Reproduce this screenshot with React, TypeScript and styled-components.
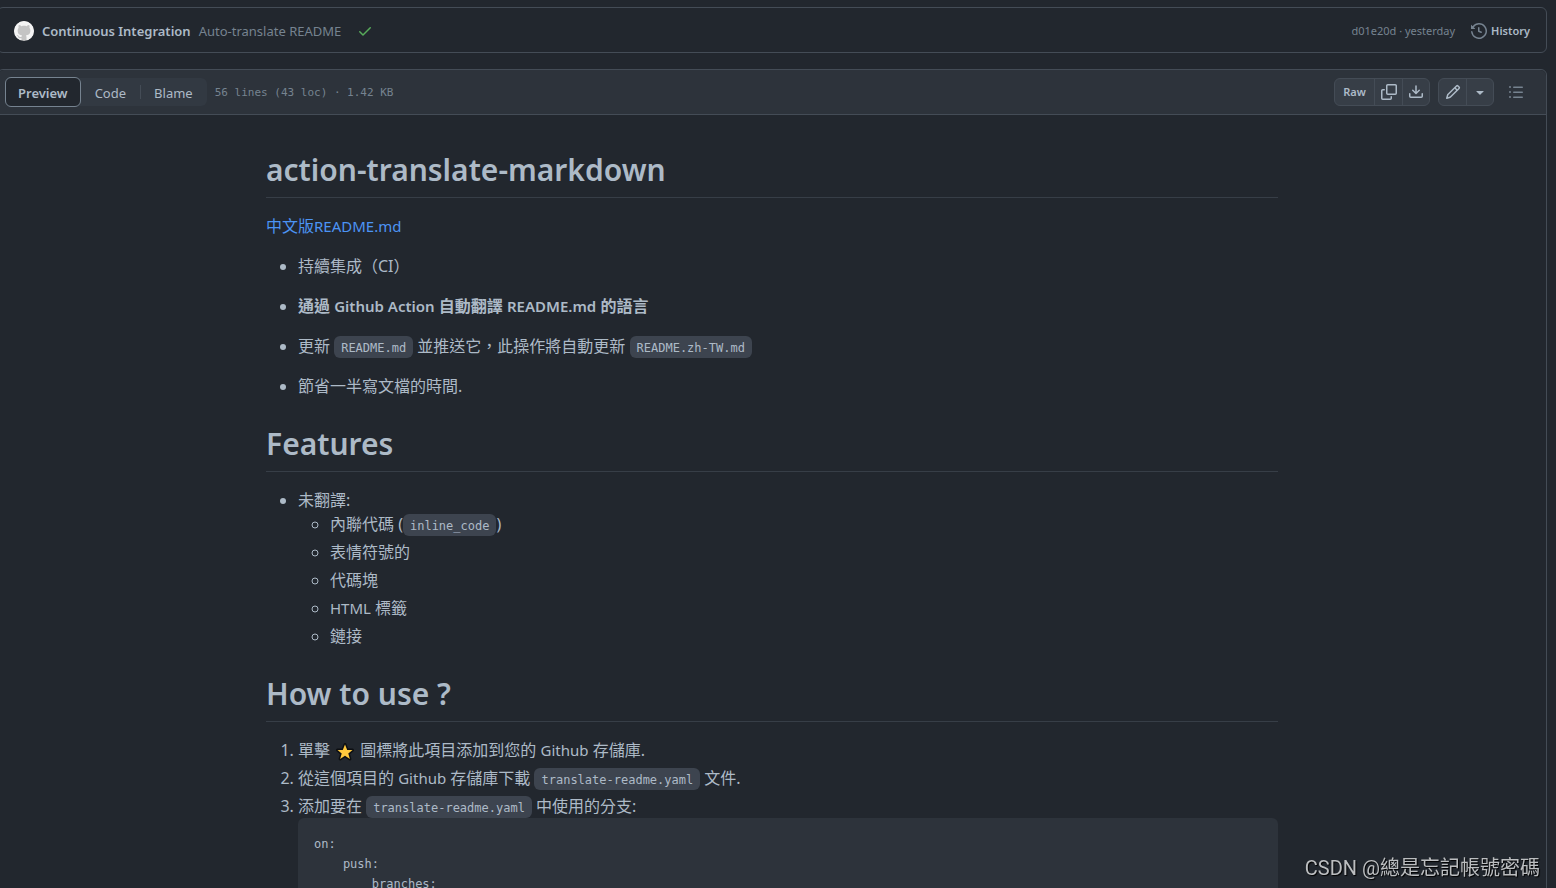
import React from 'react';
import styled, { createGlobalStyle, css } from 'styled-components';

const c = {
  canvas: '#22272e',
  subtle: '#2d333b',
  control: '#373e47',
  border: '#444c56',
  borderMuted: '#373e47',
  text: '#adbac7',
  muted: '#768390',
  link: '#4c94f4',
  success: '#57ab5a',
};

const sans = `"Noto Sans", "Noto Sans CJK TC", sans-serif`;
const mono = `"DejaVu Sans Mono", monospace`;

const icons = {
  check: 'M13.78 4.22a.75.75 0 0 1 0 1.06l-7.25 7.25a.75.75 0 0 1-1.06 0L2.22 9.28a.751.751 0 0 1 .018-1.042.751.751 0 0 1 1.042-.018L6 10.94l6.72-6.72a.75.75 0 0 1 1.06 0Z',
  history: 'm.427 1.927 1.215 1.215a8.002 8.002 0 1 1-1.6 5.685.75.75 0 1 1 1.493-.154 6.5 6.5 0 1 0 1.18-4.458l1.358 1.358A.25.25 0 0 1 3.896 6H.25A.25.25 0 0 1 0 5.75V2.104a.25.25 0 0 1 .427-.177ZM7.75 4a.75.75 0 0 1 .75.75v2.992l2.028.812a.75.75 0 0 1-.557 1.392l-2.5-1A.751.751 0 0 1 7 8.25v-3.5A.75.75 0 0 1 7.75 4Z',
  copy: 'M0 6.75C0 5.784.784 5 1.75 5h1.5a.75.75 0 0 1 0 1.5h-1.5a.25.25 0 0 0-.25.25v7.5c0 .138.112.25.25.25h7.5a.25.25 0 0 0 .25-.25v-1.5a.75.75 0 0 1 1.5 0v1.5A1.75 1.75 0 0 1 9.25 16h-7.5A1.75 1.75 0 0 1 0 14.25ZM5 1.75C5 .784 5.784 0 6.75 0h7.5C15.216 0 16 .784 16 1.75v7.5A1.75 1.75 0 0 1 14.25 11h-7.5A1.75 1.75 0 0 1 5 9.25Zm1.75-.25a.25.25 0 0 0-.25.25v7.5c0 .138.112.25.25.25h7.5a.25.25 0 0 0 .25-.25v-7.5a.25.25 0 0 0-.25-.25Z',
  download: 'M2.75 14A1.75 1.75 0 0 1 1 12.25v-2.5a.75.75 0 0 1 1.5 0v2.5c0 .138.112.25.25.25h10.5a.25.25 0 0 0 .25-.25v-2.5a.75.75 0 0 1 1.5 0v2.5A1.75 1.75 0 0 1 13.25 14ZM7.25 7.689V2a.75.75 0 0 1 1.5 0v5.689l1.97-1.969a.749.749 0 1 1 1.06 1.06l-3.25 3.25a.749.749 0 0 1-1.06 0L4.22 6.78a.749.749 0 1 1 1.06-1.06l1.97 1.969Z',
  pencil: 'M11.013 1.427a1.75 1.75 0 0 1 2.474 0l1.086 1.086a1.75 1.75 0 0 1 0 2.474l-8.61 8.61c-.21.21-.47.364-.756.445l-3.251.93a.75.75 0 0 1-.927-.928l.929-3.25c.081-.286.235-.547.445-.758l8.61-8.61Zm.176 4.823L9.75 4.81l-6.286 6.287a.253.253 0 0 0-.064.108l-.558 1.953 1.953-.558a.253.253 0 0 0 .108-.064Zm1.238-3.763a.25.25 0 0 0-.354 0L10.811 3.75l1.439 1.44 1.263-1.263a.25.25 0 0 0 0-.354Z',
  triangle: 'm4.427 7.427 3.396 3.396a.25.25 0 0 0 .354 0l3.396-3.396A.25.25 0 0 0 11.396 7H4.604a.25.25 0 0 0-.177.427Z',
  list: 'M5.75 2.5h8.5a.75.75 0 0 1 0 1.5h-8.5a.75.75 0 0 1 0-1.5Zm0 5h8.5a.75.75 0 0 1 0 1.5h-8.5a.75.75 0 0 1 0-1.5Zm0 5h8.5a.75.75 0 0 1 0 1.5h-8.5a.75.75 0 0 1 0-1.5ZM2 14a1 1 0 1 1 0-2 1 1 0 0 1 0 2Zm1-6a1 1 0 1 1-2 0 1 1 0 0 1 2 0ZM2 4a1 1 0 1 1 0-2 1 1 0 0 1 0 2Z',
  github: 'M8 0c4.42 0 8 3.58 8 8a8.013 8.013 0 0 1-5.45 7.59c-.4.08-.55-.17-.55-.38 0-.27.01-1.13.01-2.2 0-.75-.25-1.23-.54-1.48 1.78-.2 3.65-.88 3.65-3.95 0-.88-.31-1.59-.82-2.15.08-.2.36-1.02-.08-2.12 0 0-.67-.22-2.2.82-.64-.18-1.32-.27-2-.27-.68 0-1.36.09-2 .27-1.53-1.03-2.2-.82-2.2-.82-.44 1.1-.16 1.92-.08 2.12-.51.56-.82 1.28-.82 2.15 0 3.06 1.86 3.75 3.64 3.95-.23.2-.44.55-.51 1.07-.46.21-1.61.55-2.33-.66-.15-.24-.6-.83-1.23-.82-.67.01-.27.38.01.53.34.19.73.9.82 1.13.16.45.68 1.31 2.69.94 0 .67.01 1.3.01 1.49 0 .21-.15.45-.55.38A7.995 7.995 0 0 1 0 8c0-4.42 3.58-8 8-8Z',
};

function Icon({ name, size = 16 }: { name: keyof typeof icons; size?: number }) {
  return (
    <svg width={size} height={size} viewBox="0 0 16 16" fill="currentColor" aria-hidden="true">
      <path d={icons[name]} />
    </svg>
  );
}

const Global = createGlobalStyle`
  *, *::before, *::after { box-sizing: border-box; }
  body {
    margin: 0;
    background: ${c.canvas};
    color: ${c.text};
    font-family: ${sans};
    font-size: 13px;
    line-height: 20px;
  }
`;

const Page = styled.main`
  display: flex;
  flex-direction: column;
  gap: 16px;
  height: 100vh;
  overflow: hidden;
  padding: 7px 9px 0 0;
`;

const panel = css`
  margin-left: -3px;
  border: 1px solid ${c.border};
`;

const CommitBar = styled.section`
  ${panel}
  display: flex;
  flex-shrink: 0;
  align-items: center;
  justify-content: space-between;
  height: 46px;
  padding: 2px 16px 0;
  border-radius: 6px;
`;

const Group = styled.div<{ $gap: number }>`
  display: flex;
  align-items: center;
  gap: ${(p) => p.$gap}px;
`;

const Avatar = styled.span`
  display: flex;
  width: 20px;
  height: 20px;
  overflow: hidden;
  border-radius: 50%;
  background: #c4c4c4;
  color: #f4f4f4;
`;

const PlainLink = styled.a<{ $tone: 'text' | 'muted' | 'success'; $strong?: boolean; $small?: boolean }>`
  display: inline-flex;
  align-items: center;
  gap: 4px;
  color: ${(p) => c[p.$tone]};
  font-size: ${(p) => (p.$small ? 11 : 13)}px;
  font-weight: ${(p) => (p.$strong ? 600 : 400)};
  text-decoration: none;
  svg { color: ${(p) => (p.$tone === 'text' ? c.muted : c[p.$tone])}; }
`;

const CheckLink = styled(PlainLink)`
  padding: 0 8px;
`;

const FilePanel = styled.section`
  ${panel}
  flex-shrink: 0;
  border-radius: 6px;
`;

const Toolbar = styled.header`
  display: flex;
  align-items: center;
  justify-content: space-between;
  height: 45px;
  padding: 0 16px 0 7px;
  border-bottom: 1px solid ${c.border};
  border-radius: 6px 6px 0 0;
  background: ${c.subtle};
`;

const Segments = styled.div`
  display: flex;
  align-items: center;
  height: 28px;
  border-radius: 6px;
  background: #323942;
`;

const Segment = styled.button<{ $active?: boolean; $divided?: boolean }>`
  position: relative;
  height: ${(p) => (p.$active ? 30 : 28)}px;
  padding: 2px ${(p) => (p.$active ? 12 : 13)}px 0;
  border: 1px solid ${(p) => (p.$active ? '#768390' : 'transparent')};
  border-radius: 6px;
  background: ${(p) => (p.$active ? c.canvas : 'transparent')};
  color: ${c.text};
  font: ${(p) => (p.$active ? 600 : 400)} 13px/20px ${sans};
  ${(p) => p.$divided && css`
    &::before {
      content: '';
      position: absolute;
      left: -1px;
      top: 6px;
      width: 1px;
      height: 14px;
      background: ${c.border};
    }
  `}
`;

const FileInfo = styled.span`
  padding-top: 2px;
  color: ${c.muted};
  font: 11px/20px ${mono};
`;

const ButtonGroup = styled.div`
  display: flex;
  height: 28px;
  overflow: hidden;
  border: 1px solid ${c.border};
  border-radius: 6px;
  background: ${c.control};
`;

const ToolButton = styled.button<{ $wide?: boolean }>`
  display: flex;
  align-items: center;
  justify-content: center;
  width: ${(p) => (p.$wide ? 39 : 27)}px;
  padding: 0;
  border: 0;
  background: transparent;
  color: ${c.text};
  font: 600 11px/20px ${sans};
  & + & {
    width: 28px;
    border-left: 1px solid ${c.border};
  }
  & + &:last-child { width: 27px; }
`;

const IconButton = styled.button`
  display: flex;
  align-items: center;
  justify-content: center;
  width: 28px;
  height: 28px;
  padding: 0;
  border: 0;
  background: transparent;
  color: ${c.muted};
`;

const Article = styled.article`
  max-width: 1012px;
  margin: 0 auto;
  padding: 33px 0 32px;
  font-size: 16px;
  line-height: 24px;
`;

const Heading = styled.h1`
  margin: 24px 0 16px;
  padding: 4px 0 9px;
  border-bottom: 1px solid ${c.borderMuted};
  font-size: 30px;
  font-weight: 600;
  line-height: 36px;
  &:first-child { margin-top: 0; }
`;

const Paragraph = styled.p`
  height: 24px;
  margin: 0 0 16px;
`;

const Link = styled.a`
  color: ${c.link};
  text-decoration: none;
`;

const List = styled.ul<{ $loose?: boolean }>`
  margin: 0 0 16px;
  padding-left: 32px;
  & & { margin: 0; }
  & > li + li { margin-top: ${(p) => (p.$loose ? 16 : 4)}px; }
`;

const Steps = styled(List).attrs({ as: 'ol' })``;

const Line = styled.p<{ $strong?: boolean }>`
  height: 24px;
  margin: 0;
  font-weight: ${(p) => (p.$strong ? 600 : 400)};
`;

const Latin = styled.span`
  font-size: 15px;
`;

const Code = styled.code`
  padding: 5px 7px 3px;
  border-radius: 6px;
  background: #3d444f;
  font: 12px/14px ${mono};
`;

const CodeBlock = styled.pre`
  margin: 0;
  padding: 16px;
  overflow: hidden;
  border-radius: 6px;
  background: ${c.subtle};
  font: 12px/20px ${mono};
  code { font: inherit; }
`;

const StarIcon = styled.svg`
  width: 20px;
  height: 20px;
  margin: 0 1px;
  vertical-align: -6px;
`;

const Watermark = styled.div`
  position: fixed;
  right: 16px;
  bottom: 5px;
  color: #bcbec0;
  font: 20px/30px Roboto, "Noto Sans CJK TC", sans-serif;
  text-shadow: 1px 1px 1px #000;
`;

const workflow = `on:
    push:
        branches:
            - main
            - dev
    pull_request:
        branches:
            - main`;

export default function App() {
  return (
    <>
      <Global />
      <Page>
        <CommitBar>
          <Group $gap={8}>
            <Avatar><Icon name="github" size={20} /></Avatar>
            <PlainLink href="#author" $tone="text" $strong>Continuous Integration</PlainLink>
            <PlainLink href="#commit" $tone="muted">Auto-translate README</PlainLink>
            <CheckLink href="#checks" $tone="success" aria-label="Checks passed"><Icon name="check" /></CheckLink>
          </Group>
          <Group $gap={16}>
            <PlainLink href="#hash" $tone="muted" $small>d01e20d · yesterday</PlainLink>
            <PlainLink href="#history" $tone="text" $strong $small><Icon name="history" />History</PlainLink>
          </Group>
        </CommitBar>

        <FilePanel>
          <Toolbar>
            <Group $gap={8}>
              <Segments>
                <Segment $active>Preview</Segment>
                <Segment>Code</Segment>
                <Segment $divided>Blame</Segment>
              </Segments>
              <FileInfo>56 lines (43 loc) · 1.42 KB</FileInfo>
            </Group>
            <Group $gap={8}>
              <ButtonGroup>
                <ToolButton $wide>Raw</ToolButton>
                <ToolButton aria-label="Copy"><Icon name="copy" /></ToolButton>
                <ToolButton aria-label="Download"><Icon name="download" /></ToolButton>
              </ButtonGroup>
              <ButtonGroup>
                <ToolButton aria-label="Edit"><Icon name="pencil" /></ToolButton>
                <ToolButton aria-label="More edit options"><Icon name="triangle" /></ToolButton>
              </ButtonGroup>
              <IconButton aria-label="Outline"><Icon name="list" /></IconButton>
            </Group>
          </Toolbar>

          <Article>
            <Heading>action-translate-markdown</Heading>
            <Paragraph><Link href="#zh-TW">中文版<Latin>README.md</Latin></Link></Paragraph>
            <List $loose>
              <li><Line>持續集成（CI）</Line></li>
              <li><Line $strong>通過 <Latin>Github Action</Latin> 自動翻譯 <Latin>README.md</Latin> 的語言</Line></li>
              <li><Line>更新 <Code>README.md</Code> 並推送它，此操作將自動更新 <Code>README.zh-TW.md</Code></Line></li>
              <li><Line>節省一半寫文檔的時間.</Line></li>
            </List>

            <Heading>Features</Heading>
            <List>
              <li>
                <Line>未翻譯:</Line>
                <List>
                  <li><Line>內聯代碼 (<Code>inline_code</Code>)</Line></li>
                  <li><Line>表情符號的</Line></li>
                  <li><Line>代碼塊</Line></li>
                  <li><Line><Latin>HTML</Latin> 標籤</Line></li>
                  <li><Line>鏈接</Line></li>
                </List>
              </li>
            </List>

            <Heading>How to use ?</Heading>
            <Steps>
              <li>
                <Line>
                  單擊{' '}
                  <StarIcon viewBox="0 0 20 20" role="img" aria-label="star">
                    <path
                      d="M10 2.500L12.200 8H17.500L13.300 11.500L14.900 17L10 13.800L5.100 17L6.700 11.500L2.500 8H7.800Z"
                      fill="#ffc83d" stroke="#0d0f12" strokeWidth="3" strokeLinejoin="round" paintOrder="stroke"
                    />
                  </StarIcon>{' '}
                  圖標將此項目添加到您的 <Latin>Github</Latin> 存儲庫.
                </Line>
              </li>
              <li><Line>從這個項目的 <Latin>Github</Latin> 存儲庫下載 <Code>translate-readme.yaml</Code> 文件.</Line></li>
              <li>
                <Line>添加要在 <Code>translate-readme.yaml</Code> 中使用的分支:</Line>
                <CodeBlock><code>{workflow}</code></CodeBlock>
              </li>
            </Steps>
          </Article>
        </FilePanel>
      </Page>
      <Watermark>CSDN @總是忘記帳號密碼</Watermark>
    </>
  );
}
